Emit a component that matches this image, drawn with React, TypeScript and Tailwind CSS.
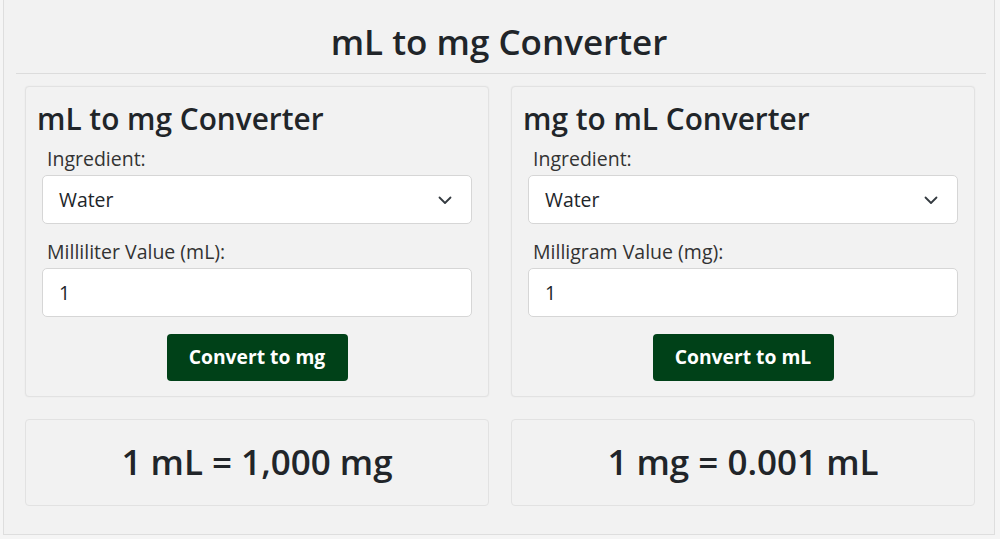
import React from "react";

function Chevron() {
  return (
    <svg width="16" height="16" viewBox="0 0 16 16" fill="none" className="shrink-0">
      <path d="M2.5 5.5 L8 11 L13.5 5.5" stroke="#343a40" strokeWidth="1.8" strokeLinecap="round" strokeLinejoin="round" />
    </svg>
  );
}

function ConverterCard({ title, valueLabel, button }: { title: string; valueLabel: string; button: string }) {
  return (
    <div className="border border-[#e2e2e2] rounded-[4px] bg-[#f2f2f2] pl-[11px] pr-[16px] pt-[13px] pb-[15px] shadow-[0_0_2px_rgba(0,0,0,0.05)]">
      <h2 className="text-[29.8px] leading-[38px] font-semibold text-[#212529] mb-[8px]">{title}</h2>
      <div className="pl-[5px]">
        <label className="block text-[19.5px] leading-[26px] text-[#333] pl-[5px] mb-[3px]">Ingredient:</label>
        <div className="h-[49px] bg-white border border-[#d6d6d6] rounded-[5px] flex items-center justify-between pl-[16px] pr-[18px] text-[19.4px] text-[#212529]">
          <span>Water</span>
          <Chevron />
        </div>
        <label className="block text-[19.5px] leading-[26px] text-[#333] pl-[5px] mt-[15px] mb-[3px]">{valueLabel}</label>
        <div className="h-[49px] bg-white border border-[#d6d6d6] rounded-[5px] flex items-center pl-[16px] text-[19.4px] text-[#212529]">
          1
        </div>
        <div className="flex justify-center mt-[17px]">
          <button className="bg-[#004118] text-white font-bold text-[19.3px] h-[47px] w-[181px] rounded-[4px]">
            {button}
          </button>
        </div>
      </div>
    </div>
  );
}

function ResultCard({ text }: { text: string }) {
  return (
    <div className="border border-[#e2e2e2] rounded-[4px] h-[87px] flex items-center justify-center text-[35px] font-semibold text-[#212529]">
      {text}
    </div>
  );
}

export default function App() {
  return (
    <div className="w-[1000px] h-[539px] bg-[#f5f5f5] overflow-hidden" style={{ fontFamily: '"Open Sans", "Noto Sans", sans-serif' }}>
      <div className="ml-[3px] w-[992px] h-[535px] bg-[#f2f2f2] border-x border-b border-[#dedede]">
        <div className="h-[73px] flex items-center justify-center">
          <h1 className="text-[35px] font-semibold text-[#212529] pt-[9px] leading-none">mL to mg Converter</h1>
        </div>
        <div className="ml-[12px] mr-[8px] h-px bg-[#dcdcdc]" />
        <div className="pl-[21px] pr-[19px] pt-[12px] grid grid-cols-2 gap-x-[22px] gap-y-[22px]">
          <ConverterCard title="mL to mg Converter" valueLabel="Milliliter Value (mL):" button="Convert to mg" />
          <ConverterCard title="mg to mL Converter" valueLabel="Milligram Value (mg):" button="Convert to mL" />
          <ResultCard text="1 mL = 1,000 mg" />
          <ResultCard text="1 mg = 0.001 mL" />
        </div>
      </div>
    </div>
  );
}
